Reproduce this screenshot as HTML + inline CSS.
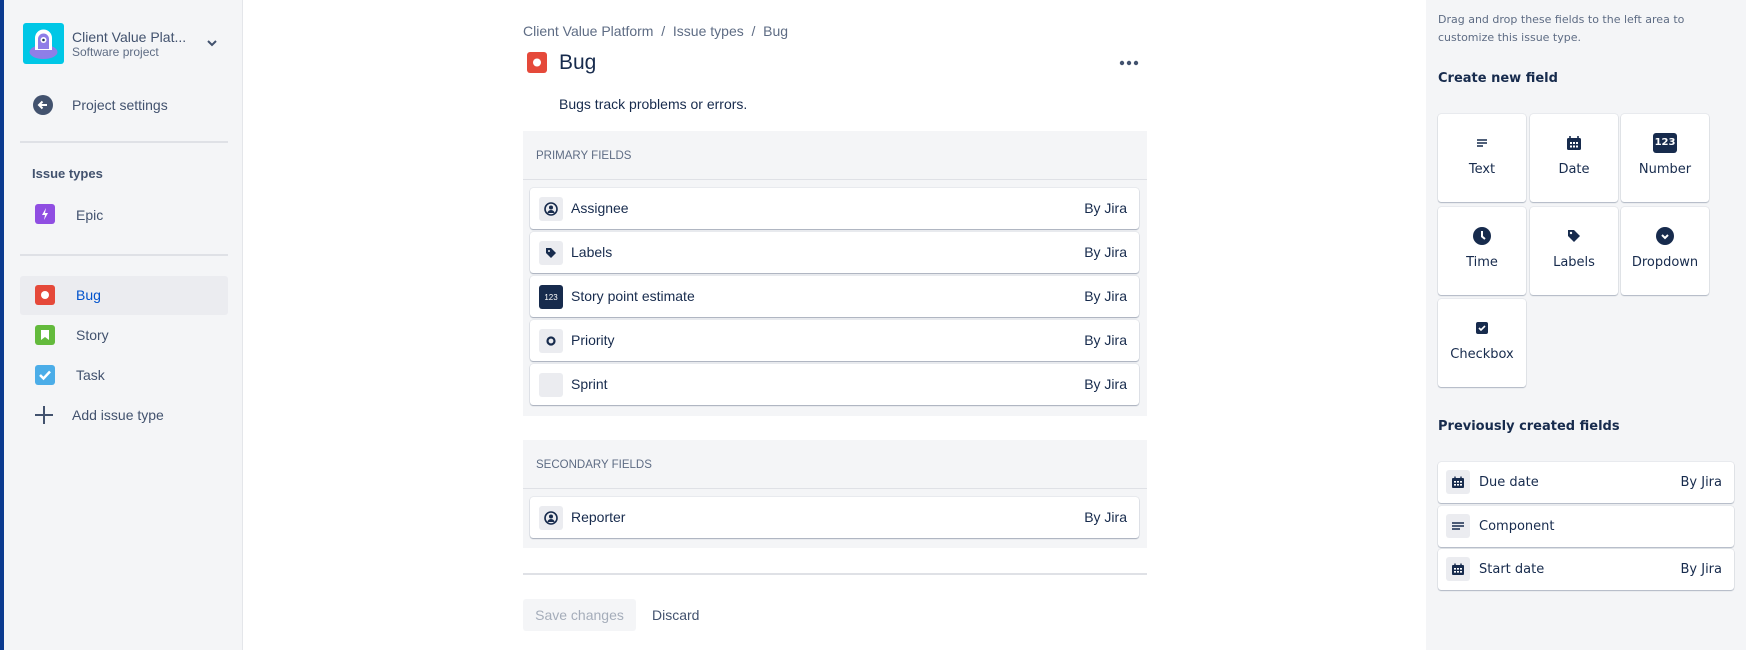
<!DOCTYPE html>
<html><head><meta charset="utf-8"><style>
*{box-sizing:border-box;margin:0;padding:0}
body{width:1751px;height:650px;position:relative;background:#fff;font-family:"Liberation Sans",sans-serif;color:#172b4d;overflow:hidden}
.a{position:absolute}
.side{left:0;top:0;width:243px;height:650px;background:#f4f5f7;border-left:4px solid #0b3a8f;border-right:1px solid #e4e6ea}
.t14{font-size:14px;color:#42526e}
.icn{width:20px;height:20px;border-radius:3px}
.box{background:#f4f5f7;left:523px;width:624px}
.hdr{font-size:11.5px;color:#5e6c84;left:13px}
.row{left:7px;width:609px;height:41px;background:#fff;border-radius:3px;box-shadow:0 1px 1px rgba(9,30,66,.3),0 0 1px rgba(9,30,66,.3)}
.ib{position:absolute;left:9px;top:9px;width:24px;height:24px;background:#ebecf0;border-radius:3px;display:flex;align-items:center;justify-content:center}
.rl{position:absolute;left:41px;top:12px;font-size:14px;color:#172b4d}
.rr{position:absolute;right:12px;top:12px;font-size:14px;color:#172b4d}
.rp{left:1426px;top:0;width:320px;height:650px;background:#f4f5f7}
.dv{font-family:"DejaVu Sans",sans-serif}
.tile{width:88px;height:88px;background:#fff;border-radius:3px;box-shadow:0 1px 1px rgba(9,30,66,.25),0 0 1px rgba(9,30,66,.3);text-align:center}
.tile .ic{position:absolute;left:0;right:0;top:20px;height:18px;display:flex;justify-content:center;align-items:center}
.tile .lb{position:absolute;left:0;right:0;top:48px;font-size:13px;color:#172b4d;font-family:"DejaVu Sans",sans-serif}
.pr{left:1438px;width:296px;height:41px;background:#fff;border-radius:3px;box-shadow:0 1px 1px rgba(9,30,66,.25),0 0 1px rgba(9,30,66,.3);font-family:"DejaVu Sans",sans-serif;font-size:13px}
.pr .b{position:absolute;left:8px;top:8px;width:24px;height:24px;background:#ebecf0;border-radius:3px;display:flex;align-items:center;justify-content:center}
.pr .l{position:absolute;left:41px;top:13px}
.pr .r{position:absolute;right:12px;top:13px}
</style></head><body>
<div class="a side"></div>
<div class="a" style="left:23px;top:23px;width:41px;height:41px;background:#00c7e6;border-radius:3px;overflow:hidden">
<svg width="41" height="41" viewBox="0 0 41 41"><ellipse cx="20.5" cy="29" rx="14" ry="7" fill="#8f7ee7"/><path d="M12 27 V15 a8.5 8.5 0 0 1 17 0 V27z" fill="#fff"/><path d="M15 26 V16 a5.5 5.5 0 0 1 11 0 V26z" fill="#8f7ee7"/><circle cx="20.5" cy="17" r="3" fill="#fff"/><circle cx="20.5" cy="17" r="1.3" fill="#253858"/></svg></div>
<div class="a" style="left:72px;top:29px;font-size:14px;color:#42526e">Client Value Plat...</div>
<div class="a" style="left:72px;top:45px;font-size:12px;color:#5e6c84">Software project</div>
<svg class="a" style="left:206px;top:38px" width="12" height="10"><path d="M2 3 L6 7 L10 3" stroke="#42526e" stroke-width="2" fill="none"/></svg>
<svg class="a" style="left:33px;top:95px" width="20" height="20"><circle cx="10" cy="10" r="10" fill="#42526e"/><path d="M14 10 H6 M9.5 6.5 L6 10 L9.5 13.5" stroke="#fff" stroke-width="2" fill="none"/></svg>
<div class="a t14" style="left:72px;top:97px">Project settings</div>
<div class="a" style="left:20px;top:141px;width:208px;height:2px;background:#dfe1e6"></div>
<div class="a" style="left:32px;top:166px;font-size:13px;font-weight:bold;color:#42526e">Issue types</div>
<div class="a icn" style="left:35px;top:204px;background:#904ee2"><svg width="20" height="20"><path d="M11 4 L7 11 H10 L9 16 L13 9 H10z" fill="#fff"/></svg></div>
<div class="a t14" style="left:76px;top:207px">Epic</div>
<div class="a" style="left:20px;top:254px;width:208px;height:2px;background:#dfe1e6"></div>
<div class="a" style="left:20px;top:276px;width:208px;height:39px;background:#ebecf0;border-radius:3px"></div>
<div class="a icn" style="left:35px;top:285px;background:#e5493a"><svg width="20" height="20"><circle cx="10" cy="10" r="4" fill="#fff"/></svg></div>
<div class="a" style="left:76px;top:287px;font-size:14px;color:#0052cc">Bug</div>
<div class="a icn" style="left:35px;top:325px;background:#63ba3c"><svg width="20" height="20"><path d="M6 5 H14 V15 L10 12 L6 15z" fill="#fff"/></svg></div>
<div class="a t14" style="left:76px;top:327px">Story</div>
<div class="a icn" style="left:35px;top:365px;background:#4bade8"><svg width="20" height="20"><path d="M5 10 L8.5 13.5 L15 6.5" stroke="#fff" stroke-width="2.5" fill="none"/></svg></div>
<div class="a t14" style="left:76px;top:367px">Task</div>
<svg class="a" style="left:34px;top:405px" width="20" height="20"><path d="M10 1 V19 M1 10 H19" stroke="#42526e" stroke-width="2"/></svg>
<div class="a t14" style="left:72px;top:407px">Add issue type</div>

<div class="a" style="left:523px;top:23px;font-size:14px;color:#5e6c84">Client Value Platform &nbsp;/&nbsp; Issue types &nbsp;/&nbsp; Bug</div>
<div class="a" style="left:527px;top:52px;width:20px;height:21px;background:#e5493a;border-radius:3px"><svg width="20" height="21"><circle cx="10" cy="10.5" r="4" fill="#fff"/></svg></div>
<div class="a" style="left:559px;top:51px;font-size:21px;color:#172b4d">Bug</div>
<svg class="a" style="left:1119px;top:60px" width="20" height="6"><circle cx="3" cy="3" r="2.2" fill="#42526e"/><circle cx="10" cy="3" r="2.2" fill="#42526e"/><circle cx="17" cy="3" r="2.2" fill="#42526e"/></svg>
<div class="a" style="left:559px;top:96px;font-size:14px;color:#172b4d">Bugs track problems or errors.</div>

<div class="a box" style="top:131px;height:285px">
<div class="a hdr" style="top:19px">PRIMARY FIELDS</div>
<div class="a" style="left:0;top:48px;width:624px;height:1px;background:#dfe1e6"></div>
<div class="a row" style="top:57px"><div class="ib"><svg width="14" height="14"><circle cx="7" cy="7" r="6" fill="none" stroke="#172b4d" stroke-width="1.6"/><circle cx="7" cy="5.5" r="2" fill="#172b4d"/><path d="M3.5 11 a3.5 3 0 0 1 7 0z" fill="#172b4d"/></svg></div><div class="rl">Assignee</div><div class="rr">By Jira</div></div>
<div class="a row" style="top:101px"><div class="ib"><svg width="12" height="12"><path d="M1 1 H6 L11 6 L6 11 L1 6z" fill="#172b4d"/><circle cx="4" cy="4" r="1" fill="#ebecf0"/></svg></div><div class="rl">Labels</div><div class="rr">By Jira</div></div>
<div class="a row" style="top:145px"><div class="ib" style="background:#172b4d"><span style="color:#fff;font-size:8px">123</span></div><div class="rl">Story point estimate</div><div class="rr">By Jira</div></div>
<div class="a row" style="top:189px"><div class="ib"><svg width="10" height="10"><circle cx="5" cy="5" r="3.5" fill="none" stroke="#172b4d" stroke-width="2.2"/></svg></div><div class="rl">Priority</div><div class="rr">By Jira</div></div>
<div class="a row" style="top:233px"><div class="ib"></div><div class="rl">Sprint</div><div class="rr">By Jira</div></div>
</div>

<div class="a box" style="top:440px;height:108px">
<div class="a hdr" style="top:19px">SECONDARY FIELDS</div>
<div class="a" style="left:0;top:48px;width:624px;height:1px;background:#dfe1e6"></div>
<div class="a row" style="top:57px"><div class="ib"><svg width="14" height="14"><circle cx="7" cy="7" r="6" fill="none" stroke="#172b4d" stroke-width="1.6"/><circle cx="7" cy="5.5" r="2" fill="#172b4d"/><path d="M3.5 11 a3.5 3 0 0 1 7 0z" fill="#172b4d"/></svg></div><div class="rl">Reporter</div><div class="rr">By Jira</div></div>
</div>
<div class="a" style="left:523px;top:573px;width:624px;height:2px;background:#dfe1e6"></div>
<div class="a" style="left:523px;top:599px;width:113px;height:32px;background:#f4f5f7;border-radius:3px;font-size:14px;color:#a5adba;text-align:center;line-height:32px">Save changes</div>
<div class="a" style="left:652px;top:607px;font-size:14px;color:#42526e">Discard</div>

<div class="a rp"></div>
<div class="a dv" style="left:1438px;top:11px;font-size:11px;line-height:18px;color:#5e6c84">Drag and drop these fields to the left area to<br>customize this issue type.</div>
<div class="a dv" style="left:1438px;top:71px;font-size:13px;font-weight:bold;color:#172b4d">Create new field</div>

<div class="a tile" style="left:1438px;top:114px"><div class="ic"><svg width="14" height="14"><path d="M2 4 H12 M2 7 H12 M2 10 H8" stroke="#172b4d" stroke-width="1.6"/></svg></div><div class="lb">Text</div></div>
<div class="a tile" style="left:1530px;top:114px"><div class="ic"><svg width="18" height="16"><rect x="2" y="3" width="14" height="12" rx="1.5" fill="#172b4d"/><path d="M5 1 V4 M13 1 V4" stroke="#172b4d" stroke-width="1.6"/><g fill="#fff"><rect x="5" y="7" width="2" height="2"/><rect x="8" y="7" width="2" height="2"/><rect x="11" y="7" width="2" height="2"/><rect x="5" y="10.5" width="2" height="2"/><rect x="8" y="10.5" width="2" height="2"/><rect x="11" y="10.5" width="2" height="2"/></g></svg></div><div class="lb">Date</div></div>
<div class="a tile" style="left:1621px;top:114px"><div class="ic"><div style="width:24px;height:20px;background:#172b4d;border-radius:3px;color:#fff;font-size:10px;font-weight:bold;line-height:20px;font-family:'DejaVu Sans',sans-serif">123</div></div><div class="lb">Number</div></div>
<div class="a tile" style="left:1438px;top:207px"><div class="ic"><svg width="18" height="18"><circle cx="9" cy="9" r="9" fill="#172b4d"/><path d="M9 4 V9.5 L12 12" stroke="#fff" stroke-width="2" fill="none"/></svg></div><div class="lb">Time</div></div>
<div class="a tile" style="left:1530px;top:207px"><div class="ic"><svg width="16" height="16"><path d="M2 2 H8 L14 8 L8 14 L2 8z" fill="#172b4d"/><circle cx="5" cy="5" r="1.2" fill="#fff"/></svg></div><div class="lb">Labels</div></div>
<div class="a tile" style="left:1621px;top:207px"><div class="ic"><svg width="18" height="18"><circle cx="9" cy="9" r="9" fill="#172b4d"/><path d="M6 8 L9 11 L12 8" stroke="#fff" stroke-width="2" fill="none"/></svg></div><div class="lb">Dropdown</div></div>
<div class="a tile" style="left:1438px;top:299px"><div class="ic"><svg width="14" height="14"><rect x="1" y="1" width="12" height="12" rx="2" fill="#172b4d"/><path d="M4 7 L6 9 L10 5" stroke="#fff" stroke-width="1.6" fill="none"/></svg></div><div class="lb">Checkbox</div></div>

<div class="a dv" style="left:1438px;top:419px;font-size:13px;font-weight:bold;color:#172b4d">Previously created fields</div>
<div class="a pr" style="top:462px"><div class="b"><svg width="14" height="13"><rect x="1" y="2" width="12" height="10" rx="1" fill="#172b4d"/><path d="M4 0.5 V3 M10 0.5 V3" stroke="#172b4d" stroke-width="1.4"/><g fill="#fff"><rect x="3" y="5" width="2" height="1.6"/><rect x="6" y="5" width="2" height="1.6"/><rect x="9" y="5" width="2" height="1.6"/><rect x="3" y="8" width="2" height="1.6"/><rect x="6" y="8" width="2" height="1.6"/><rect x="9" y="8" width="2" height="1.6"/></g></svg></div><div class="l">Due date</div><div class="r">By Jira</div></div>
<div class="a pr" style="top:506px"><div class="b"><svg width="14" height="12"><path d="M1 3 H13 M1 6 H13 M1 9 H9" stroke="#172b4d" stroke-width="1.6"/></svg></div><div class="l">Component</div></div>
<div class="a pr" style="top:549px"><div class="b"><svg width="14" height="13"><rect x="1" y="2" width="12" height="10" rx="1" fill="#172b4d"/><path d="M4 0.5 V3 M10 0.5 V3" stroke="#172b4d" stroke-width="1.4"/><g fill="#fff"><rect x="3" y="5" width="2" height="1.6"/><rect x="6" y="5" width="2" height="1.6"/><rect x="9" y="5" width="2" height="1.6"/><rect x="3" y="8" width="2" height="1.6"/><rect x="6" y="8" width="2" height="1.6"/><rect x="9" y="8" width="2" height="1.6"/></g></svg></div><div class="l">Start date</div><div class="r">By Jira</div></div>
</body></html>
